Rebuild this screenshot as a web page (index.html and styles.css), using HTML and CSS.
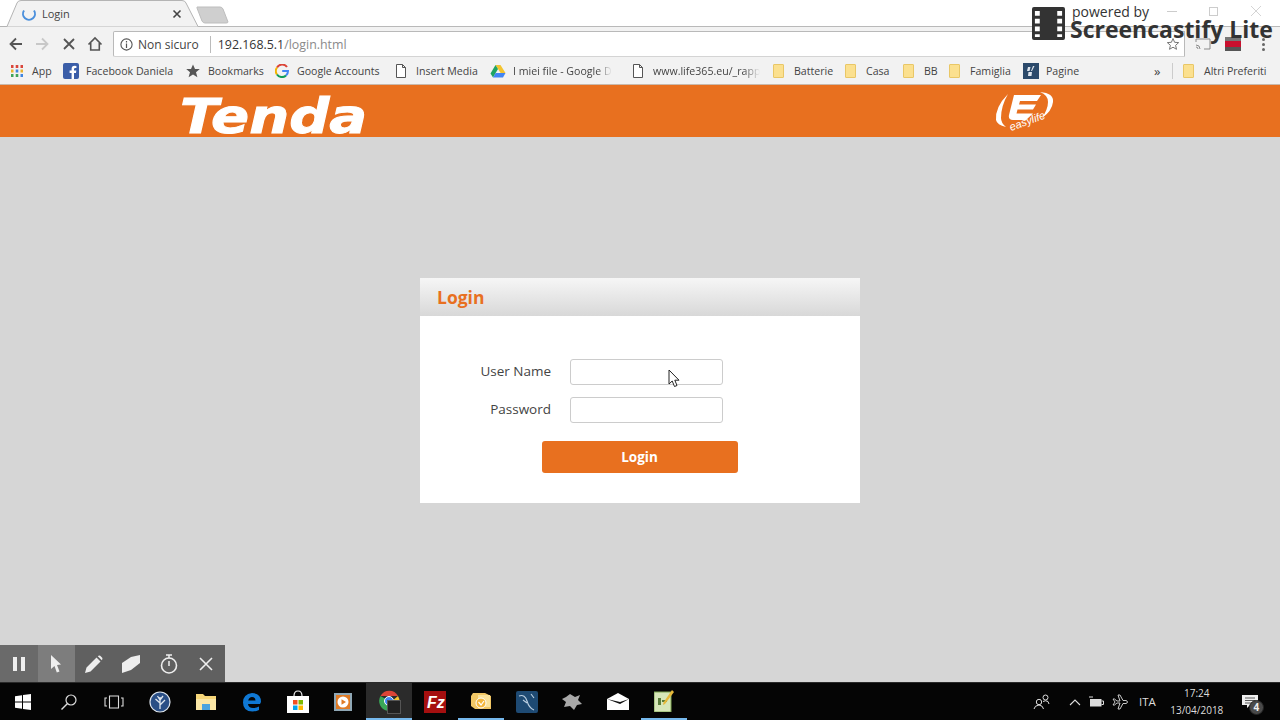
FILE: index.html
```html
<!DOCTYPE html>
<html lang="en">
<head>
    <meta charset="UTF-8">
    <meta name="viewport" content="width=device-width, initial-scale=1.0">
    <title>Login</title>
    <link rel="stylesheet" href="styles.css">
</head>
<body>
    <!-- Browser chrome -->
    <div class="tabstrip">
        <div class="tab">
            <svg class="tab-shape" width="200" height="28" viewBox="0 0 200 28"><path d="M0 26.5H7L17 3Q18 .5 21 .5H182Q185 .5 186 3L198 26.5H200" fill="#f2f2f2" stroke="#b4b4b4"/></svg>
            <svg class="tab-spinner" width="16" height="16" viewBox="0 0 16 16"><path d="M3 4.5A6 6 0 1 0 13 4.5" fill="none" stroke="#4a8fdc" stroke-width="2"/></svg>
            <span class="tab-title">Login</span>
            <svg class="tab-close" width="10" height="10" viewBox="0 0 10 10"><path d="M1.5 1.5L8.5 8.5M8.5 1.5L1.5 8.5" stroke="#444" stroke-width="1.6"/></svg>
        </div>
        <svg class="new-tab" width="34" height="18" viewBox="0 0 34 18"><path d="M1 1H24Q26 1 27 3L32 16Q32 17 30 17H9Q7 17 6 15L1 2Z" fill="#cfcfcf" stroke="#bdbdbd"/></svg>
        <div class="window-controls">
            <span class="win-min"></span>
            <span class="win-max"></span>
            <svg width="12" height="12" viewBox="0 0 12 12"><path d="M1 1L11 11M11 1L1 11" stroke="#d4d4d4"/></svg>
        </div>
    </div>

    <div class="toolbar">
        <svg class="nav-icon" width="16" height="16" viewBox="0 0 16 16"><path d="M14 8H3M8 2.5L2.5 8L8 13.5" fill="none" stroke="#555" stroke-width="1.8"/></svg>
        <svg class="nav-icon" width="16" height="16" viewBox="0 0 16 16"><path d="M2 8H13M8 2.5L13.5 8L8 13.5" fill="none" stroke="#c8c8c8" stroke-width="1.8"/></svg>
        <svg class="nav-icon nav-stop" width="16" height="16" viewBox="0 0 16 16"><path d="M3 3L13 13M13 3L3 13" stroke="#555" stroke-width="1.8"/></svg>
        <svg class="nav-icon" width="16" height="16" viewBox="0 0 16 16"><path d="M1.5 8.5L8 2L14.5 8.5M3.7 7V14H12.3V7" fill="none" stroke="#555" stroke-width="1.6"/></svg>
        <div class="omnibox">
            <svg width="13" height="13" viewBox="0 0 13 13"><circle cx="6.5" cy="6.5" r="5.6" fill="none" stroke="#555" stroke-width="1.1"/><path d="M6.5 5.6V10M6.5 3V4.4" stroke="#555" stroke-width="1.2"/></svg>
            <span class="security">Non sicuro</span>
            <span class="url"><b>192.168.5.1</b>/login.html</span>
            <svg class="omni-star" width="14" height="14" viewBox="0 0 14 14"><path d="M7 1.5L8.6 5.3L12.7 5.6L9.6 8.3L10.5 12.3L7 10.2L3.5 12.3L4.4 8.3L1.3 5.6L5.4 5.3Z" fill="none" stroke="#777"/></svg>
        </div>
        <div class="toolbar-end">
            <svg width="16" height="12" viewBox="0 0 16 12"><path d="M1 4V1H15V11H9M1 7A4 4 0 0 1 5 11M1 9A2 2 0 0 1 3 11" fill="none" stroke="#8a8a8a"/></svg>
            <span class="ext-icon"></span>
            <span class="menu-dots"><i></i><i></i><i></i></span>
        </div>
    </div>

    <div class="bookmarks">
        <div class="bm bm-app">
            <svg width="14" height="14" viewBox="0 0 14 14"><path d="M1 2.5H3.5M5.7 2.5H8.3M10.5 2.5H13" stroke="#d9463b" stroke-width="3"/><path d="M1 7H3.5M10.5 7H13" stroke="#e8b32f" stroke-width="3"/><path d="M5.7 7H8.3" stroke="#3f85e0" stroke-width="3"/><path d="M1 11.5H3.5M5.7 11.5H8.3" stroke="#3fa35a" stroke-width="3"/><path d="M10.5 11.5H13" stroke="#3f85e0" stroke-width="3"/></svg>
            App
        </div>
        <div class="bm">
            <svg width="16" height="16" viewBox="0 0 16 16"><rect width="16" height="16" rx="2" fill="#3b5ea8"/><path d="M11 16V10H13L13.3 7.6H11V6.2Q11 5 12.3 5H13.4V3Q12.6 2.8 11.6 2.8Q8.6 2.8 8.6 5.8V7.6H6.6V10H8.6V16Z" fill="#fff"/></svg>
            Facebook Daniela
        </div>
        <div class="bm">
            <svg width="16" height="16" viewBox="0 0 16 16"><path d="M8 1.5L10 6H14.8L11 9.2L12.4 14.2L8 11.4L3.6 14.2L5 9.2L1.2 6H6Z" fill="#555"/></svg>
            Bookmarks
        </div>
        <div class="bm bm-google">
            <svg width="14" height="14" viewBox="0 0 14 14"><path d="M12 3A6 6 0 0 0 2 3.5" fill="none" stroke="#db4437" stroke-width="2"/><path d="M2 3.5A6 6 0 0 0 2 10.5" fill="none" stroke="#f4b400" stroke-width="2"/><path d="M2 10.5A6 6 0 0 0 11 11.5" fill="none" stroke="#0f9d58" stroke-width="2"/><path d="M11 11.5Q13 10 13 7H7.2" fill="none" stroke="#4285f4" stroke-width="2"/></svg>
            Google Accounts
        </div>
        <div class="bm">
            <svg class="doc" width="16" height="16" viewBox="0 0 16 16"><path d="M3.5 1.5H9.5L12.5 4.5V14.5H3.5ZM9.5 1.5V4.5H12.5" fill="#fff" stroke="#555"/></svg>
            Insert Media
        </div>
        <div class="bm">
            <svg width="16" height="14" viewBox="0 0 16 14"><path d="M5.5 1H10.5L15.5 9H10.6Z" fill="#f4c430"/><path d="M5.5 1L.5 9.5L3 13.5L8 5Z" fill="#1fa463"/><path d="M3 13.5H13L15.5 9H5.6Z" fill="#4285f4"/></svg>
            <span class="bm-cut">I miei file - Google D</span>
        </div>
        <div class="bm">
            <svg class="doc" width="16" height="16" viewBox="0 0 16 16"><path d="M3.5 1.5H9.5L12.5 4.5V14.5H3.5ZM9.5 1.5V4.5H12.5" fill="#fff" stroke="#555"/></svg>
            <span class="bm-cut">www.life365.eu/_rapp</span>
        </div>
        <div class="bm"><span class="folder"></span>Batterie</div>
        <div class="bm"><span class="folder"></span>Casa</div>
        <div class="bm"><span class="folder"></span>BB</div>
        <div class="bm"><span class="folder"></span>Famiglia</div>
        <div class="bm">
            <svg width="16" height="16" viewBox="0 0 16 16"><rect width="16" height="16" fill="#2c4a6b"/><path d="M5 4H7.5L6.5 8H4ZM10 3L11.5 3L9 8H8ZM5.5 9H9L8.5 13H5Z" fill="#dfe6ee"/></svg>
            Pagine
        </div>
        <span class="bm-more">»</span>
        <span class="bm-sep"></span>
        <div class="bm"><span class="folder"></span>Altri Preferiti</div>
    </div>

    <!-- Router page -->
    <div class="brand-bar">
        <div class="tenda-logo">Tenda</div>
        <svg class="easy-logo" width="60" height="44" viewBox="0 0 60 44">
            <path d="M13 5Q0 18 1 31Q2 36 11 38Q6 34 6 29Q6 17 13 5Z" fill="#fff"/>
            <path d="M45 3Q59 4 58 13Q57 22 47 29Q53 20 53 13Q53 6 45 3Z" fill="#fff"/>
            <path d="M19 6H46L42 12H25L24 15.5H41L38 20.5H22.5L21.5 24.5H38L31 31H18Q13 31 14 26Z" fill="#fff"/>
            <text class="easy-text" x="16" y="42" transform="rotate(-20 16 42)">easylife</text>
        </svg>
    </div>

    <main class="page">
        <section class="login-card">
            <h2 class="login-title">Login</h2>
            <form class="login-form">
                <div class="form-row">
                    <label class="form-label" for="username">User Name</label>
                    <input class="form-input" id="username" type="text">
                </div>
                <div class="form-row">
                    <label class="form-label" for="password">Password</label>
                    <input class="form-input" id="password" type="password">
                </div>
                <button class="login-btn" type="button">Login</button>
            </form>
        </section>
    </main>

    <!-- Windows taskbar -->
    <footer class="taskbar">
        <div class="task"><svg width="18" height="18" viewBox="0 0 18 18"><path d="M1 3.200L8 2.200V8.500H1ZM9 2L17 1V8.500H9ZM1 9.500H8V15.800L1 14.800ZM9 9.500H17V17L9 16Z" fill="#fff"/></svg></div>
        <div class="task"><svg width="18" height="18" viewBox="0 0 18 18"><circle cx="11" cy="7" r="5" fill="none" stroke="#ddd" stroke-width="1.2"/><path d="M7.500 10.500L1.500 16.500" stroke="#ddd" stroke-width="1.4"/></svg></div>
        <div class="task"><svg width="20" height="14" viewBox="0 0 20 14"><path d="M5.500 1H14.500V13H5.500ZM3 3H1V11H3M17 3H19V11H17" fill="none" stroke="#ddd" stroke-width="1.100"/></svg></div>
        <div class="task"><svg width="22" height="22" viewBox="0 0 22 22"><circle cx="11" cy="11" r="10" fill="#2a4f86" stroke="#dfe6ee" stroke-width="1.200"/><path d="M11 18V6M11 12L6.500 8M11 14L16 9M11 9L8.500 5M11 9L14 5" stroke="#dfe6ee" stroke-width="1.300" fill="none"/></svg></div>
        <div class="task"><svg width="20" height="18" viewBox="0 0 20 18"><path d="M0 1H7L9 3H20V17H0Z" fill="#f6d679"/><path d="M0 6H20V17H0Z" fill="#fbe7a6"/><rect x="6" y="11" width="8" height="6" fill="#4aa3df"/></svg></div>
        <div class="task"><svg width="20" height="20" viewBox="0 0 20 20"><path d="M18 12H6Q6.500 16 11 16Q14.500 16 17 14.500V18Q14 19.500 10.500 19.500Q1 19.500 1 10.500Q1 2 10 1Q19 1 19 10ZM13.500 8.500Q13.500 5 10 5Q7 5 6.200 8.500Z" fill="#0f78d4"/></svg></div>
        <div class="task"><svg width="22" height="24" viewBox="0 0 22 24"><path d="M7 6Q7 1 11 1Q15 1 15 6" fill="none" stroke="#eee" stroke-width="1.200"/><rect x="0" y="6" width="22" height="17" fill="#fff"/><rect x="6" y="10" width="4.500" height="4.500" fill="#f25022"/><rect x="11.500" y="10" width="4.500" height="4.500" fill="#7fba00"/><rect x="6" y="15.500" width="4.500" height="4.500" fill="#00a4ef"/><rect x="11.500" y="15.500" width="4.500" height="4.500" fill="#ffb900"/></svg></div>
        <div class="task"><svg width="18" height="18" viewBox="0 0 18 18"><rect width="18" height="18" fill="#8fa7b5"/><rect x="2" y="2" width="14" height="14" fill="#e07b26"/><circle cx="9" cy="9" r="5.500" fill="#fff"/><path d="M7.500 6.200L12 9L7.500 11.800Z" fill="#e07b26"/></svg></div>
        <div class="task task-active task-open">
            <svg width="22" height="22" viewBox="0 0 22 22"><path d="M2.500 6A10 10 0 0 1 20 6H11Z" fill="#db4437"/><path d="M2.500 6A10 10 0 0 0 9 20.800L13 12Z" fill="#3aa757"/><path d="M20 6A10 10 0 0 1 9 20.800L13 12Z" fill="#f4c430"/><circle cx="11" cy="11" r="4.500" fill="#4285f4" stroke="#fff"/></svg>
            <span class="task-avatar"></span>
        </div>
        <div class="task"><svg width="22" height="22" viewBox="0 0 22 22"><rect width="22" height="22" fill="#a50f0f"/><text class="fz-text" x="3" y="17">Fz</text></svg></div>
        <div class="task task-open"><svg width="22" height="20" viewBox="0 0 22 20"><path d="M3 2H15L21 5V18H5L1 15V5Z" fill="#f2c765"/><path d="M8 4H20V16H8Z" fill="#fbe39a"/><circle cx="11" cy="12" r="5" fill="#f5b83d" stroke="#fff"/><path d="M8.500 11L11 14L14 10" fill="none" stroke="#fff" stroke-width="1.200"/></svg></div>
        <div class="task"><svg width="22" height="22" viewBox="0 0 22 22"><rect width="22" height="22" rx="2" fill="#1e4a73"/><path d="M3 5Q9 3 11 10T18 19M15 3L18 7M11 12L7 9" fill="none" stroke="#bcd0e2" stroke-width="1.100"/></svg></div>
        <div class="task"><svg width="22" height="20" viewBox="0 0 22 20"><path d="M5 5L9 2L14 5L19 3L17 8L21 12L16 13L13 18L9 14L3 15L5 10L1 7Z" fill="#a9a9a9"/></svg></div>
        <div class="task"><svg width="24" height="18" viewBox="0 0 24 18"><path d="M1 6L12 0L23 6V17H1Z" fill="#fff"/><path d="M1 6L14 11L23 6L14 9Z" fill="#111"/></svg></div>
        <div class="task task-open"><svg width="20" height="22" viewBox="0 0 20 22"><rect y="2" width="17" height="20" fill="#d7e7b9" stroke="#7fa653"/><path d="M4 8H7V15H4ZM8 10H13V12H8Z" fill="#5a7d3a"/><path d="M18 0L20 2L11 14L9 15L9.500 12.500Z" fill="#e6b93a"/></svg></div>

        <div class="tray">
            <svg class="tray-people" width="18" height="16" viewBox="0 0 18 16"><circle cx="6" cy="8" r="2.700" fill="none" stroke="#ddd"/><path d="M1 15Q1.500 11.500 6 11Q10 11.500 10.500 15" fill="none" stroke="#ddd"/><circle cx="12.500" cy="3.500" r="2.500" fill="none" stroke="#ddd"/><path d="M10 7.500Q12.500 6 15 7.500L16 10" fill="none" stroke="#ddd"/></svg>
            <svg class="tray-up" width="12" height="8" viewBox="0 0 12 8"><path d="M1 7L6 2L11 7" fill="none" stroke="#ddd" stroke-width="1.100"/></svg>
            <svg class="tray-battery" width="16" height="12" viewBox="0 0 16 12"><rect x="2" y="3" width="11.500" height="7.500" fill="#ddd"/><path d="M13.500 5H15.500V8.500H13.500M1 1H5" fill="none" stroke="#ddd"/></svg>
            <svg class="tray-plane" width="16" height="16" viewBox="0 0 16 16"><path d="M1 5L3 8L1 11H2.500L5 9H8L6 15H8L11 9.500H14Q15.500 9 15.500 8T14 6.500H11L8 1H6L8 7H5L2.500 5Z" fill="none" stroke="#ddd" stroke-width=".9"/></svg>
            <span class="tray-lang">ITA</span>
            <div class="clock"><span>17:24</span><span>13/04/2018</span></div>
            <div class="notify">
                <svg width="16" height="14" viewBox="0 0 16 14"><path d="M0 0H16V10H8L5 13V10H0Z" fill="#eee"/><path d="M3 3H13M3 5.500H13M3 8H10" stroke="#333" stroke-width=".8"/></svg>
                <span class="notify-badge">4</span>
            </div>
        </div>
    </footer>

    <!-- Overlays from the screen recorder -->
    <div class="recorder-mark">
        <svg width="33" height="33" viewBox="0 0 34 34"><rect width="34" height="34" rx="2" fill="#333"/><path d="M3 4H8V9H3ZM3 12H8V17H3ZM3 20H8V25H3ZM3 28H8V31H3ZM26 4H31V9H26ZM26 12H31V17H26ZM26 20H31V25H26ZM26 28H31V31H26Z" fill="#fff"/></svg>
        <div class="recorder-text">
            <span class="recorder-by">powered by</span>
            <span class="recorder-name">Screencastify Lite</span>
        </div>
    </div>

    <div class="recorder-bar">
        <button class="rec-btn rec-pause"><svg width="12" height="14" viewBox="0 0 12 14"><path d="M0 0H4V14H0ZM8 0H12V14H8Z" fill="#eee"/></svg></button>
        <button class="rec-btn rec-active"><svg width="12" height="18" viewBox="0 0 12 18"><path d="M1 0L11 9.500L7 10L9.500 16.500L6.800 17.500L4.500 11L1 14Z" fill="#eee"/></svg></button>
        <button class="rec-btn"><svg width="18" height="18" viewBox="0 0 18 18"><path d="M0 18L1.500 12.500L11.500 2.500L15.500 6.500L5.500 16.500ZM12.800 1.200Q14 0 15.200 .8L17.200 2.800Q18 4 16.800 5.200Z" fill="#eee"/></svg></button>
        <button class="rec-btn"><svg width="20" height="18" viewBox="0 0 20 18"><path d="M1 8L10 2L19 0V8L10 15L1 18Z" fill="#eee"/></svg></button>
        <button class="rec-btn"><svg width="18" height="20" viewBox="0 0 18 20"><path d="M6 1H12M9 1V4" stroke="#eee" stroke-width="1.500"/><circle cx="9" cy="11.500" r="7.500" fill="none" stroke="#eee" stroke-width="1.600"/><path d="M9 7V12" stroke="#eee" stroke-width="1.500"/></svg></button>
        <button class="rec-btn"><svg width="14" height="14" viewBox="0 0 14 14"><path d="M1 1L13 13M13 1L1 13" stroke="#eee" stroke-width="1.600"/></svg></button>
    </div>

    <!-- Mouse pointer -->
    <svg class="pointer" width="12" height="19" viewBox="0 0 12 19"><path d="M1 1V15L4.200 12L6.500 17.500L9 16.500L6.800 11.200H11Z" fill="#fff" stroke="#222"/></svg>
</body>
</html>
```

FILE: styles.css
```css
* {
    margin: 0;
    padding: 0;
    box-sizing: border-box;
}

:root {
    --orange: #e8701f;
    --page-grey: #d6d6d6;
    --chrome: #f2f2f2;
    --chrome-line: #b9b9b9;
    --text: #3c3c3c;
}

html,
body {
    height: 100%;
}

body {
    width: 1280px;
    height: 720px;
    overflow: hidden;
    position: relative;
    display: flex;
    flex-direction: column;
    font-family: "Open Sans", "Noto Sans", sans-serif;
    background: var(--page-grey);
    color: var(--text);
}

/* Tab strip */
.tabstrip {
    height: 27px;
    flex: none;
    display: flex;
    background: #fff;
    border-bottom: 1px solid var(--chrome-line);
    position: relative;
}

.tab {
    width: 196px;
    height: 27px;
    flex: none;
    position: relative;
    display: flex;
    align-items: center;
    padding-left: 21px;
}

.tab-shape {
    position: absolute;
    top: 0;
    left: 0;
}

.tab-spinner {
    position: relative;
    flex: none;
}

.tab-title {
    position: relative;
    margin-left: 5px;
    font-size: 11px;
    color: #444;
    flex: 1;
}

.tab-close {
    position: relative;
    margin-right: 14px;
}

.new-tab {
    flex: none;
    margin: 6px 0 0 0;
}

.window-controls {
    margin-left: auto;
    display: flex;
    align-items: center;
    gap: 32px;
    padding: 0 18px 4px 0;
}

.win-min {
    width: 10px;
    height: 1px;
    background: #ccc;
}

.win-max {
    width: 9px;
    height: 9px;
    border: 1px solid #ccc;
}

/* Address row */
.toolbar {
    height: 30px;
    flex: none;
    display: flex;
    align-items: center;
    gap: 10px;
    padding: 4px 0 0 8px;
    background: var(--chrome);
}

.nav-icon {
    flex: none;
}

.nav-stop {
    margin-left: 1px;
}

.omnibox {
    width: 1072px;
    height: 26px;
    flex: none;
    display: flex;
    align-items: center;
    padding: 0 4px 0 6px;
    background: #fff;
    border: 1px solid var(--chrome-line);
    border-bottom-color: #d4d4d4;
    border-radius: 2px 0 0 2px;
    font-size: 12px;
}

.security {
    margin-left: 5px;
    padding-right: 11px;
    border-right: 1px solid #bbb;
    line-height: 17px;
    color: #444;
}

.url {
    margin-left: 7px;
    font-size: 12.4px;
    color: #8a8a8a;
}

.url b {
    font-weight: 400;
    color: #333;
}

.omni-star {
    margin-left: auto;
}

.toolbar-end {
    display: flex;
    align-items: center;
}

.ext-icon {
    width: 16px;
    height: 14px;
    margin: 0 21px 0 14px;
    background: linear-gradient(#777 0 30%, #c8102e 30% 70%, #555 70%);
}

.menu-dots {
    display: flex;
    flex-direction: column;
    gap: 2px;
}

.menu-dots i {
    width: 3px;
    height: 3px;
    border-radius: 50%;
    background: #666;
}

/* Bookmarks row */
.bookmarks {
    height: 28px;
    flex: none;
    display: flex;
    align-items: center;
    padding-left: 10px;
    background: var(--chrome);
    border-bottom: 1px solid #c9b9ab;
    font-size: 10.6px;
    color: #444;
    white-space: nowrap;
}

.bm {
    flex: none;
    display: flex;
    align-items: center;
    gap: 7px;
}

.bm svg {
    flex: none;
}

.bm-app,
.bm-google {
    gap: 8px;
}

/* bookmark slots, the widths are what the bar gave each one */
.bm:nth-child(1) { width: 53px; }
.bm:nth-child(2) { width: 122px; }
.bm:nth-child(3) { width: 90px; }
.bm:nth-child(4) { width: 118px; }
.bm:nth-child(5) { width: 97px; }
.bm:nth-child(6) { width: 140px; }
.bm:nth-child(7) { width: 141px; }
.bm:nth-child(8) { width: 72px; }
.bm:nth-child(9) { width: 58px; }
.bm:nth-child(10) { width: 46px; }
.bm:nth-child(11) { width: 76px; }
.bm:nth-child(12) { width: 131px; }

.bm-cut {
    display: block;
    -webkit-mask-image: linear-gradient(90deg, #000 85%, transparent);
    mask-image: linear-gradient(90deg, #000 85%, transparent);
}

.folder {
    width: 11px;
    height: 14px;
    flex: none;
    margin: 0 3px 0 2px;
    background: #fbe08f;
    border: 1px solid #e9c766;
    border-radius: 1px;
}

.bm-more {
    width: 18px;
    font-size: 13px;
}

.bm-sep {
    width: 1px;
    height: 16px;
    margin-right: 8px;
    background: #ccc;
}

/* Router header */
.brand-bar {
    height: 52px;
    flex: none;
    display: flex;
    align-items: center;
    background: var(--orange);
    padding-left: 180px;
}

.tenda-logo {
    width: 188px;
    font-family: "DejaVu Sans", sans-serif;
    font-style: italic;
    font-weight: 700;
    font-size: 48px;
    line-height: 52px;
    color: #fff;
    -webkit-text-stroke: 1px #fff;
    white-space: nowrap;
    padding-top: 10px;
    transform: scaleX(1.17);
    transform-origin: left;
}

.easy-logo {
    margin-left: 627px;
}

.easy-text {
    font-family: "Liberation Sans", sans-serif;
    font-style: italic;
    font-size: 11px;
    fill: #fff;
}

/* Login */
.page {
    flex: 1;
    display: flex;
    justify-content: center;
    padding-top: 141px;
    background: var(--page-grey);
}

.login-card {
    width: 440px;
    height: 225px;
    background: #fff;
}

.login-title {
    height: 38px;
    padding: 0 17px;
    font-size: 17.5px;
    font-weight: 700;
    line-height: 38px;
    color: var(--orange);
    background: linear-gradient(#f6f6f6, #d8d8d8);
}

.login-form {
    display: flex;
    flex-direction: column;
    align-items: center;
    padding-top: 43px;
}

.form-row {
    width: 440px;
    height: 26px;
    margin-bottom: 12px;
    display: flex;
    align-items: center;
}

.form-label {
    width: 131px;
    margin-top: -2px;
    font-size: 13.5px;
    text-align: right;
    color: #444;
}

.form-input {
    width: 153px;
    height: 26px;
    margin-left: 19px;
    background: #fff;
    border: 1px solid #ccc;
    border-radius: 3px;
}

.login-btn {
    width: 196px;
    height: 32px;
    margin: 6px 1px 0 0;
    font-family: inherit;
    font-size: 13.5px;
    font-weight: 700;
    color: #fff;
    background: var(--orange);
    border: none;
    border-radius: 3px;
}

/* Taskbar */
.taskbar {
    height: 38px;
    flex: none;
    display: flex;
    background: #050505;
    border-top: 1px solid #2a2a2a;
}

.task {
    width: 45.8px;
    height: 37px;
    flex: none;
    position: relative;
    display: flex;
    align-items: center;
    justify-content: center;
}

.task-open {
    border-bottom: 2px solid #76b9ed;
}

.task-active {
    background: #2b2b2b;
}

.task-avatar {
    position: absolute;
    right: 11px;
    bottom: 4px;
    width: 14px;
    height: 14px;
    background: #222;
    border: 1px solid #555;
}

.fz-text {
    font-family: "Liberation Sans", sans-serif;
    font-style: italic;
    font-weight: 700;
    font-size: 16px;
    fill: #fff;
}

.tray {
    flex: 1;
    display: flex;
    align-items: center;
    padding-left: 346px;
    color: #ddd;
}

.tray-people {
    flex: none;
}

.tray-up {
    margin-left: 18px;
}

.tray-battery {
    margin-left: 7px;
}

.tray-plane {
    margin-left: 8px;
}

.tray-lang {
    margin-left: 11px;
    font-size: 11.5px;
}

.clock {
    width: 76px;
    margin-left: 3px;
    display: flex;
    flex-direction: column;
    align-items: center;
    font-size: 10px;
    line-height: 17px;
}

.notify {
    position: relative;
    margin-left: 7px;
    width: 24px;
    height: 20px;
}

.notify-badge {
    position: absolute;
    right: 2px;
    bottom: -3px;
    width: 15px;
    height: 15px;
    border-radius: 50%;
    background: #4a4a4a;
    border: 1px solid #222;
    font-size: 10px;
    font-weight: 700;
    line-height: 13px;
    text-align: center;
    color: #eee;
}

/* Recorder overlays */
.recorder-mark {
    position: absolute;
    top: 7px;
    left: 1032px;
    display: flex;
    gap: 5px;
    color: #333;
}

.recorder-text {
    display: flex;
    flex-direction: column;
}

.recorder-by {
    margin: -2px 0 0 2px;
    font-size: 14px;
    line-height: 13px;
}

.recorder-name {
    font-size: 23px;
    font-weight: 700;
    line-height: 23px;
    white-space: nowrap;
}

.recorder-bar {
    position: absolute;
    left: 0;
    top: 645px;
    width: 225px;
    height: 37px;
    display: flex;
    background: #606060;
}

.rec-btn {
    width: 37.5px;
    height: 37px;
    display: flex;
    align-items: center;
    justify-content: center;
    background: none;
    border: none;
}

.rec-pause {
    background: #6a6a6a;
}

.rec-active {
    background: #7d7d7d;
}

.pointer {
    position: absolute;
    left: 668px;
    top: 369px;
}
```
